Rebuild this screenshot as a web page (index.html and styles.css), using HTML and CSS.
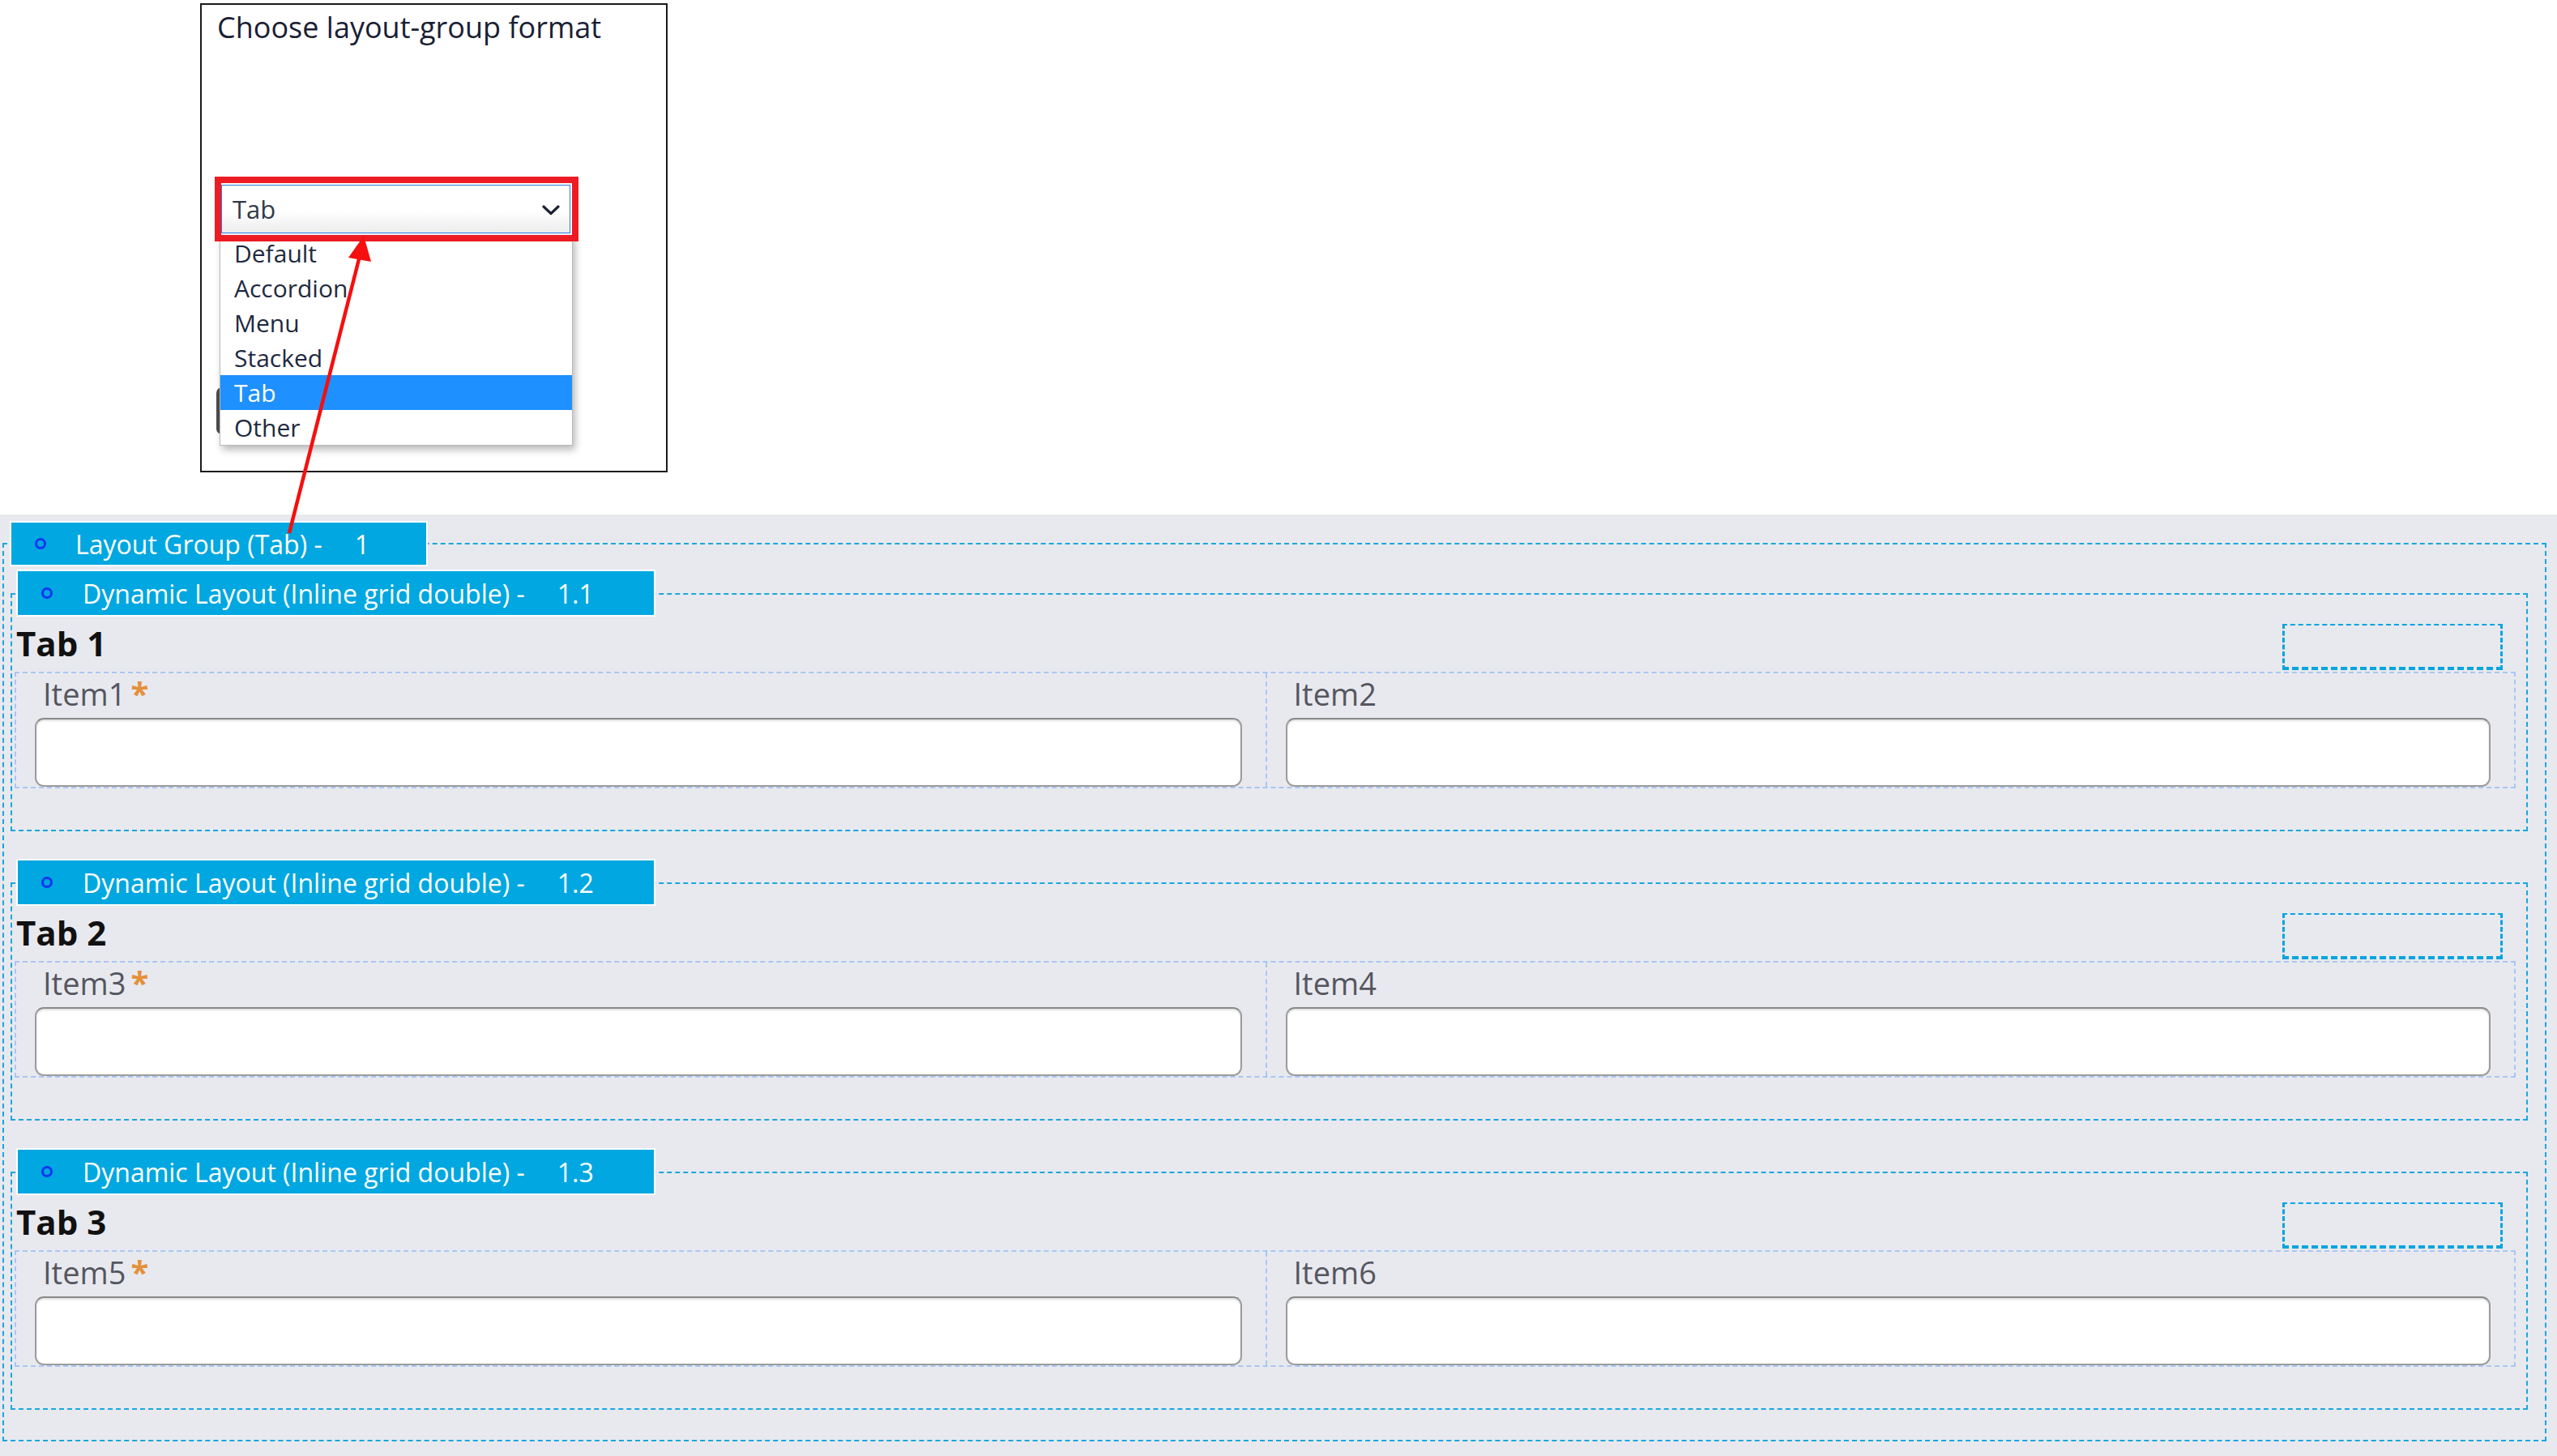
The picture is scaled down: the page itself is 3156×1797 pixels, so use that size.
FILE: index.html
```html
<!DOCTYPE html>
<html lang="en">
<head>
<meta charset="utf-8">
<title>Layout group format</title>
<link rel="stylesheet" href="styles.css">
</head>
<body>
<div class="top">
  <div class="dialog">
    <h1 class="dialog-title">Choose layout-group format</h1>
    <div class="field">
      <div class="highlight">
        <div class="select">
          <span class="select-value">Tab</span>
          <svg class="chevron" width="22" height="13" viewBox="0 0 22 13"><path d="M2 2 L11 10.5 L20 2" fill="none" stroke="#1c2230" stroke-width="3.2" stroke-linecap="round" stroke-linejoin="round"/></svg>
        </div>
      </div>
      <ul class="options">
        <li>Default</li>
        <li>Accordion</li>
        <li>Menu</li>
        <li>Stacked</li>
        <li class="selected">Tab</li>
        <li>Other</li>
      </ul>
      <div class="hidden-btn"></div>
    </div>
  </div>
</div>

<div class="canvas">
  <div class="lg-box">
    <div class="banner lg-banner"><span class="dot"></span><span class="banner-text">Layout Group (Tab) -</span><span class="num">1</span></div>

    <section class="dl first">
      <div class="banner dl-banner"><span class="dot"></span><span class="banner-text">Dynamic Layout (Inline grid double) -</span><span class="num">1.1</span></div>
      <div class="dl-head">
        <h2 class="tab-title">Tab 1</h2>
        <div class="placeholder"></div>
      </div>
      <div class="grid">
        <div class="cell"><div class="label">Item1<span class="req">*</span></div><div class="input"></div></div>
        <div class="cell second"><div class="label">Item2</div><div class="input"></div></div>
      </div>
    </section>

    <section class="dl">
      <div class="banner dl-banner"><span class="dot"></span><span class="banner-text">Dynamic Layout (Inline grid double) -</span><span class="num">1.2</span></div>
      <div class="dl-head">
        <h2 class="tab-title">Tab 2</h2>
        <div class="placeholder"></div>
      </div>
      <div class="grid">
        <div class="cell"><div class="label">Item3<span class="req">*</span></div><div class="input"></div></div>
        <div class="cell second"><div class="label">Item4</div><div class="input"></div></div>
      </div>
    </section>

    <section class="dl">
      <div class="banner dl-banner"><span class="dot"></span><span class="banner-text">Dynamic Layout (Inline grid double) -</span><span class="num">1.3</span></div>
      <div class="dl-head">
        <h2 class="tab-title">Tab 3</h2>
        <div class="placeholder"></div>
      </div>
      <div class="grid">
        <div class="cell"><div class="label">Item5<span class="req">*</span></div><div class="input"></div></div>
        <div class="cell second"><div class="label">Item6</div><div class="input"></div></div>
      </div>
    </section>
  </div>
</div>

<svg class="arrow" width="3156" height="1797" viewBox="0 0 3156 1797">
  <line x1="357" y1="658" x2="444" y2="316" stroke="#f50f0f" stroke-width="4.5"/>
  <polygon points="449,291 430,318 458,323" fill="#f50f0f"/>
</svg>
</body>
</html>
```

FILE: styles.css
```css
html, body {
  margin: 0;
  padding: 0;
}
body {
  font-family: "Open Sans", "Liberation Sans", sans-serif;
  background: #ffffff;
  position: relative;
  width: 3156px;
  min-height: 1797px;
  overflow: hidden;
}

/* ---------- top dialog ---------- */
.top {
  height: 635px;
  box-sizing: border-box;
  padding: 4px 0 0 247px;
}
.dialog {
  width: 577px;
  height: 579px;
  box-sizing: border-box;
  border: 2px solid #1b1b1b;
  padding: 0 0 0 19px;
}
.dialog-title {
  margin: 5px 0 0 0;
  font-size: 36px;
  line-height: 46px;
  font-weight: 400;
  color: #1a2033;
  white-space: nowrap;
}
.field {
  position: relative;
  margin: 161px 0 0 -3px;
  width: 449px;
}
.highlight {
  position: relative;
  z-index: 3;
  box-sizing: border-box;
  width: 449px;
  height: 80px;
  border: 8px solid #ed1c24;
  padding: 2px 2px 2px 0;
}
.select {
  box-sizing: border-box;
  height: 60px;
  border: 1px solid #2d7be0;
  background: linear-gradient(#ffffff 55%, #ececec);
  display: flex;
  align-items: center;
  justify-content: space-between;
  padding: 0 12px 0 13px;
}
.select-value {
  font-size: 31px;
  color: #333a48;
}
.chevron {
  display: block;
  margin-top: 2px;
}
.options {
  position: absolute;
  z-index: 2;
  left: 6px;
  top: 72px;
  width: 434px;
  margin: 0;
  padding: 0;
  list-style: none;
  background: #ffffff;
  border: 1px solid #b9b9b9;
  box-shadow: 3px 5px 9px rgba(0, 0, 0, 0.28);
}
.options li {
  height: 43px;
  line-height: 43px;
  padding-left: 17px;
  font-size: 30px;
  color: #1f2a40;
}
.options li.selected {
  background: #1e90ff;
  color: #ffffff;
}
.hidden-btn {
  margin: 180px 0 0 2px;
  width: 120px;
  height: 58px;
  border-radius: 7px;
  background: #4d4d4d;
}

/* ---------- gray canvas ---------- */
.canvas {
  background: #e8e9ee;
  height: 1162px;
  box-sizing: border-box;
  padding: 35px 13px 0 3px;
}
.lg-box {
  border: 2px dashed #1ba6df;
  padding-bottom: 37px;
}
.banner {
  box-sizing: border-box;
  border: 2px solid #ffffff;
  background: #00a7e0;
  color: #ffffff;
  display: flex;
  align-items: center;
  font-size: 32px;
  white-space: nowrap;
}
.dot {
  box-sizing: border-box;
  width: 14px;
  height: 14px;
  border: 3.5px solid #1436f0;
  border-radius: 50%;
  margin-left: 29px;
  margin-right: 36px;
  flex: none;
}
.num {
  margin-left: 40px;
}
.lg-banner {
  margin: -29px 0 0 7px;
  width: 516px;
  height: 56px;
}
.dl {
  border: 2px dashed #1ba6df;
  margin: 63px 21px 0 8px;
  padding-bottom: 51px;
}
.dl.first {
  margin-top: 33px;
}
.dl-banner {
  margin: -31px 0 0 5px;
  width: 789px;
  height: 58px;
}
.dl-banner .dot {
  margin-right: 37px;
}
.dl-head {
  height: 68px;
  display: flex;
  justify-content: space-between;
  align-items: flex-start;
}
.tab-title {
  margin: 6px 0 0 5px;
  font-size: 42px;
  line-height: 54px;
  font-weight: 700;
  color: #111111;
}
.placeholder {
  box-sizing: border-box;
  margin: 9px 29px 0 0;
  width: 272px;
  height: 57px;
  border: 3px dashed #07a4df;
  border-top-width: 2px;
  border-right-width: 3px;
  border-bottom-width: 4px;
}
.grid {
  box-sizing: border-box;
  margin: 0 13px 0 3px;
  height: 144px;
  border: 2px dashed #a9c6f4;
  display: grid;
  grid-template-columns: 1fr 1fr;
}
.cell {
  padding: 1px 29px 0 23px;
}
.cell.second {
  border-left: 2px dashed #a9c6f4;
}
.label {
  margin-left: 10px;
  font-size: 38px;
  line-height: 48px;
  color: #55565f;
}
.req {
  color: #e4903a;
  font-weight: 700;
  font-size: 40px;
  margin-left: 6px;
}
.input {
  box-sizing: border-box;
  margin-top: 6px;
  height: 85px;
  background: #ffffff;
  border: 2px solid #9c9c9c;
  border-top-color: #8a8a8a;
  border-radius: 11px;
  box-shadow: inset 0 2px 2px rgba(0, 0, 0, 0.12);
}

/* ---------- annotation arrow ---------- */
.arrow {
  position: absolute;
  left: 0;
  top: 0;
  z-index: 10;
  pointer-events: none;
}
```
